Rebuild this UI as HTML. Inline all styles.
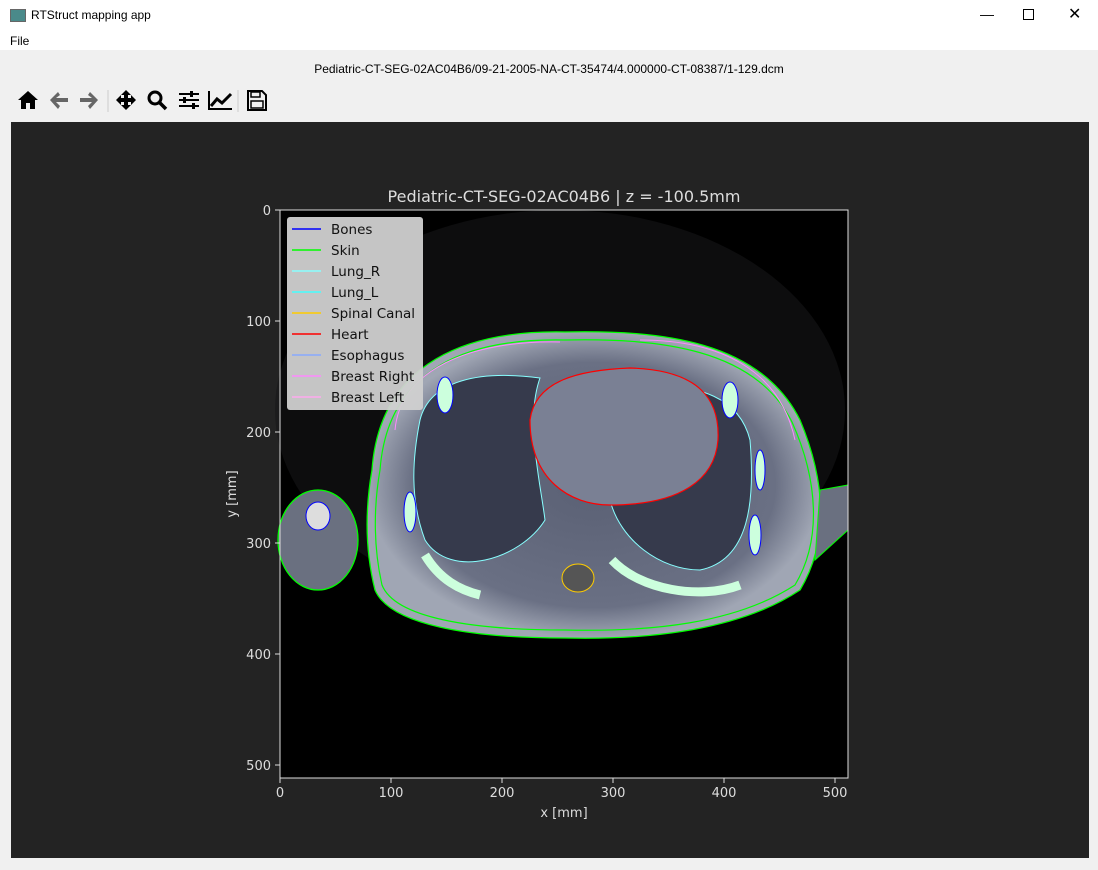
<!DOCTYPE html>
<html><head><style>
body{margin:0;width:1098px;height:870px;background:#f0f0f0;font-family:"Liberation Sans","DejaVu Sans",sans-serif;overflow:hidden;position:relative}
.tb{position:absolute;left:0;top:0;width:1098px;height:30px;background:#fff;font-size:12px}
.mb{position:absolute;left:0;top:30px;width:1098px;height:20px;background:#fff;font-size:12px}
.path{position:absolute;top:62px;left:0;width:1098px;text-align:center;font-size:12px;color:#000}
.cv{position:absolute;left:11px;top:122px;width:1078px;height:736px;background:#232323}
</style></head><body>
<div class="tb"><div style="position:absolute;left:10px;top:9px;width:14px;height:11px;background:#4a8a8a;border:1px solid #666"></div><span style="position:absolute;left:31px;top:8px">RTStruct mapping app</span>
<span style="position:absolute;left:980px;top:6px;font-size:14px">&#8212;</span>
<div style="position:absolute;left:1023px;top:9px;width:9px;height:9px;border:1px solid #000"></div>
<span style="position:absolute;left:1068px;top:4px;font-size:16px">&#10005;</span></div>
<div class="mb"><span style="position:absolute;left:10px;top:4px">File</span></div>
<div class="path">Pediatric-CT-SEG-02AC04B6/09-21-2005-NA-CT-35474/4.000000-CT-08387/1-129.dcm</div>
<svg style="position:absolute;left:0;top:86px" width="280" height="30">
<path d="M18 14 L28 5 L38 14 L35 14 L35 23 L30 23 L30 17 L26 17 L26 23 L21 23 L21 14Z" fill="#000"/>
<path d="M50 14 L58 6 L60 9 L56 12 L68 12 L68 16 L56 16 L60 20 L58 23Z" fill="#666"/>
<path d="M98 14 L90 6 L88 9 L92 12 L80 12 L80 16 L92 16 L88 20 L90 23Z" fill="#666"/>
<line x1="108" y1="4" x2="108" y2="26" stroke="#ccc"/>
<path d="M126 4 L131 9 L128 9 L128 12 L131 12 L131 9 L136 14 L131 19 L131 16 L128 16 L128 19 L131 19 L126 24 L121 19 L124 19 L124 16 L121 16 L121 19 L116 14 L121 9 L121 12 L124 12 L124 9 L121 9Z" fill="#000"/>
<circle cx="155" cy="12" r="6" fill="none" stroke="#000" stroke-width="3"/><line x1="159" y1="16" x2="166" y2="23" stroke="#000" stroke-width="3.5"/>
<g stroke="#000" stroke-width="2"><line x1="179" y1="8" x2="199" y2="8"/><line x1="179" y1="14" x2="199" y2="14"/><line x1="179" y1="20" x2="199" y2="20"/></g>
<rect x="190" y="5" width="3" height="6" fill="#000"/><rect x="183" y="11" width="3" height="6" fill="#000"/><rect x="192" y="17" width="3" height="6" fill="#000"/>
<path d="M209 5 L209 23 L232 23" fill="none" stroke="#000" stroke-width="2"/><path d="M211 20 L217 13 L222 17 L231 8" fill="none" stroke="#000" stroke-width="3"/>
<line x1="238" y1="4" x2="238" y2="26" stroke="#ccc"/>
<path d="M248 5 L262 5 L266 9 L266 24 L248 24Z" fill="none" stroke="#000" stroke-width="2"/><rect x="251" y="6" width="9" height="5" fill="none" stroke="#000" stroke-width="1.5"/><rect x="251" y="15" width="12" height="7" fill="none" stroke="#000" stroke-width="1.5"/>
</svg>
<div class="cv"></div>
<svg style="position:absolute;left:0;top:0" width="1098" height="870" font-family="DejaVu Sans, Liberation Sans, sans-serif">
<defs><radialGradient id="g" cx="0.5" cy="0.5" r="0.5"><stop offset="0" stop-color="#5a6074"/><stop offset="0.8" stop-color="#6a7084"/><stop offset="1" stop-color="#a0a6b4"/></radialGradient></defs>
<rect x="280" y="210" width="568" height="568" fill="#000"/>
<ellipse cx="560" cy="410" rx="285" ry="200" fill="#151518" opacity="0.6"/>
<path d="M372 470 C380 360 470 330 565 332 C660 330 760 340 800 420 C825 480 830 540 800 590 C740 630 650 640 565 638 C470 638 390 625 375 590 C365 550 365 510 372 470Z" fill="url(#g)" stroke="#0f0" stroke-width="1.3"/>
<path d="M380 470 C388 365 472 338 565 340 C658 338 755 348 792 422 C818 480 822 540 795 585 C735 624 650 632 565 630 C472 630 395 618 382 585 C374 550 373 510 380 470Z" fill="none" stroke="#0f0" stroke-width="1.2"/>
<ellipse cx="318" cy="540" rx="40" ry="50" fill="#6a7080" stroke="#0f0" stroke-width="1.3"/>
<ellipse cx="318" cy="516" rx="12" ry="14" fill="#ddd" stroke="#00f"/>
<path d="M820 490 L848 485 L848 530 L815 560 Z" fill="#6a7080" stroke="#0f0"/>
<path d="M420 420 C430 380 480 370 540 378 C525 420 540 480 545 520 C520 560 450 580 425 540 C410 500 412 460 420 420Z" fill="#363a4c" stroke="#8ff" stroke-width="1"/>
<path d="M640 390 C700 380 740 400 750 440 C755 500 750 560 700 570 C660 570 620 540 610 500 C640 470 650 430 640 390Z" fill="#363a4c" stroke="#8ff" stroke-width="1"/>
<path d="M530 420 C535 380 580 370 630 368 C700 370 720 400 718 440 C715 480 680 505 610 505 C570 505 530 480 530 420Z" fill="#7a8094" stroke="#f00" stroke-width="1.2"/>
<path d="M395 430 C400 370 470 340 560 342 M640 340 C720 340 780 370 795 440" fill="none" stroke="#f8f" stroke-width="1"/>
<ellipse cx="578" cy="578" rx="16" ry="14" fill="#555" stroke="#fc0"/>
<path d="M612 560 C640 590 700 600 740 585" fill="none" stroke="#cfd" stroke-width="9"/>
<path d="M425 555 C440 580 460 590 480 595" fill="none" stroke="#cfd" stroke-width="9"/>
<ellipse cx="410" cy="512" rx="6" ry="20" fill="#cfd" stroke="#00f"/>
<ellipse cx="755" cy="535" rx="6" ry="20" fill="#cfd" stroke="#00f"/>
<ellipse cx="760" cy="470" rx="5" ry="20" fill="#cfd" stroke="#00f"/>
<ellipse cx="445" cy="395" rx="8" ry="18" fill="#cfd" stroke="#00f"/>
<ellipse cx="730" cy="400" rx="8" ry="18" fill="#cfd" stroke="#00f"/>
<rect x="280" y="210" width="568" height="568" fill="none" stroke="#ddd" stroke-width="1"/>
<text x="564" y="202" fill="#ddd" font-size="16" text-anchor="middle">Pediatric-CT-SEG-02AC04B6 | z = -100.5mm</text>
<g fill="#ddd" font-size="13" text-anchor="middle">
<text x="280" y="797">0</text><text x="391" y="797">100</text><text x="502" y="797">200</text><text x="613" y="797">300</text><text x="724" y="797">400</text><text x="835" y="797">500</text>
<text x="564" y="817">x [mm]</text></g>
<g stroke="#ddd"><line x1="280" y1="778" x2="280" y2="783"/><line x1="391" y1="778" x2="391" y2="783"/><line x1="502" y1="778" x2="502" y2="783"/><line x1="613" y1="778" x2="613" y2="783"/><line x1="724" y1="778" x2="724" y2="783"/><line x1="835" y1="778" x2="835" y2="783"/>
<line x1="275" y1="210" x2="280" y2="210"/><line x1="275" y1="321" x2="280" y2="321"/><line x1="275" y1="432" x2="280" y2="432"/><line x1="275" y1="543" x2="280" y2="543"/><line x1="275" y1="654" x2="280" y2="654"/><line x1="275" y1="765" x2="280" y2="765"/></g>
<g fill="#ddd" font-size="13" text-anchor="end">
<text x="271" y="215">0</text><text x="271" y="326">100</text><text x="271" y="437">200</text><text x="271" y="548">300</text><text x="271" y="659">400</text><text x="271" y="770">500</text></g>
<text x="236" y="494" fill="#ddd" font-size="13" text-anchor="middle" transform="rotate(-90 236 494)">y [mm]</text>
<rect x="287" y="217" width="136" height="193" rx="3" fill="#d0d0d0" opacity="0.95"/>
<g stroke-width="1.5">
<line x1="292" y1="229" x2="321" y2="229" stroke="#00f"/><line x1="292" y1="250" x2="321" y2="250" stroke="#0f0"/><line x1="292" y1="271" x2="321" y2="271" stroke="#8ff"/><line x1="292" y1="292" x2="321" y2="292" stroke="#4ff"/><line x1="292" y1="313" x2="321" y2="313" stroke="#fc0"/><line x1="292" y1="334" x2="321" y2="334" stroke="#f00"/><line x1="292" y1="355" x2="321" y2="355" stroke="#8af"/><line x1="292" y1="376" x2="321" y2="376" stroke="#f8f"/><line x1="292" y1="397" x2="321" y2="397" stroke="#fae"/></g>
<g fill="#111" font-size="13.5">
<text x="331" y="234">Bones</text><text x="331" y="255">Skin</text><text x="331" y="276">Lung_R</text><text x="331" y="297">Lung_L</text><text x="331" y="318">Spinal Canal</text><text x="331" y="339">Heart</text><text x="331" y="360">Esophagus</text><text x="331" y="381">Breast Right</text><text x="331" y="402">Breast Left</text></g>
</svg>
</body></html>
